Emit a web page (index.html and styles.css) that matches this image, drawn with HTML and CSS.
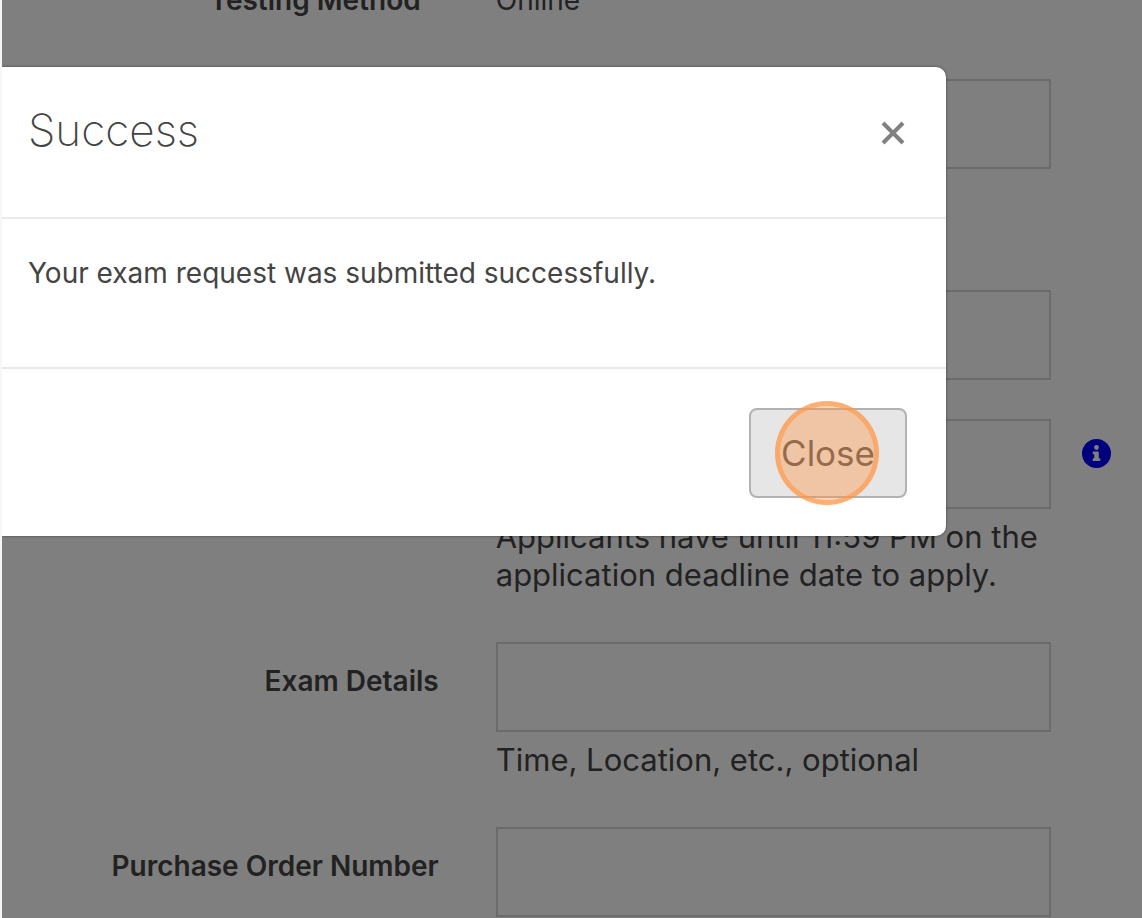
FILE: index.html
```html
<!DOCTYPE html>
<html lang="en">
<head>
  <meta charset="UTF-8">
  <meta name="viewport" content="width=device-width, initial-scale=1.0">
  <title>Exam Request</title>
  <link rel="stylesheet" href="styles.css">
</head>
<body>
  <div class="page">
    <form class="exam-form">
      <div class="form-row static-row">
        <span class="form-label">Testing Method</span>
        <span class="form-text">Online</span>
      </div>
      <div class="form-row spaced-row">
        <div class="field">
          <input type="text" class="form-input" aria-label="Testing location">
        </div>
      </div>
      <div class="form-row">
        <div class="field">
          <input type="text" class="form-input" aria-label="Exam date">
        </div>
      </div>
      <div class="form-row">
        <div class="field">
          <input type="text" class="form-input" aria-label="Application deadline">
          <p class="help">Applicants have until 11:59 PM on the application deadline date to apply.</p>
        </div>
        <a href="#" class="info" aria-label="More information">
          <svg viewBox="0 0 512 512" aria-hidden="true">
            <circle cx="256" cy="256" r="256" fill="#00f"/>
            <path fill="#fff" d="M256 106a43 43 0 1 1 0 86a43 43 0 1 1 0-86zM200 220h84a12 12 0 0 1 12 12v108h16a12 12 0 0 1 12 12v24a12 12 0 0 1-12 12H200a12 12 0 0 1-12-12v-24a12 12 0 0 1 12-12h16v-72h-16a12 12 0 0 1-12-12v-24a12 12 0 0 1 12-12z"/>
          </svg>
        </a>
      </div>
      <div class="form-row">
        <label class="form-label" for="exam-details">Exam Details</label>
        <div class="field">
          <input type="text" class="form-input" id="exam-details">
          <p class="help">Time, Location, etc., optional</p>
        </div>
      </div>
      <div class="form-row">
        <label class="form-label" for="po-number">Purchase Order Number</label>
        <div class="field">
          <input type="text" class="form-input" id="po-number">
        </div>
      </div>
    </form>

    <div class="backdrop">
      <div class="modal" role="dialog" aria-modal="true" aria-labelledby="modal-title">
        <div class="modal-header">
          <h1 class="modal-title" id="modal-title">Success</h1>
          <button type="button" class="modal-x" aria-label="Dismiss">
            <svg viewBox="0 0 24 24" aria-hidden="true">
              <path d="M2 2L22 22M22 2L2 22" stroke="#808080" stroke-width="4" fill="none"/>
            </svg>
          </button>
        </div>
        <div class="modal-body">
          <p>Your exam request was submitted successfully.</p>
        </div>
        <div class="modal-footer">
          <button type="button" class="btn">Close<span class="click-marker"></span></button>
        </div>
      </div>
    </div>
  </div>
</body>
</html>
```
FILE: styles.css
```css
* {
  box-sizing: border-box;
}

body {
  margin: 0;
  font-family: Inter, sans-serif;
  color: #444;
  background-color: #fff;
}

.page {
  position: relative;
  min-height: 100vh;
  border-left: 2px solid #f2f7fc;
  overflow: hidden;
}

/* Form */
.exam-form {
  margin-top: -19px;
  font-size: 31px;
  line-height: 38px;
}

.form-row {
  display: grid;
  grid-template-columns: 5fr 6fr 29px;
  column-gap: 31px;
  align-items: start;
  padding-right: 31px;
  margin-bottom: 39px;
}

.form-row:last-child {
  margin-bottom: 0;
}

.static-row {
  margin-bottom: 60px;
}

.spaced-row {
  margin-bottom: 121px;
}

.form-label {
  grid-column: 1;
  padding: 20px 26px 0 0;
  font-size: 28px;
  font-weight: 600;
  text-align: right;
}

.static-row .form-label {
  padding: 0 44px 0 0;
}

.form-text,
.field {
  grid-column: 2;
}

.form-text {
  font-size: 28px;
}

.form-input {
  display: block;
  width: 100%;
  height: 90px;
  padding: 0 24px;
  border: 2px solid #d6d6d6;
  background-color: #fff;
  font: inherit;
  color: inherit;
}

.help {
  margin: 9px 0;
}

.info {
  grid-column: 3;
  padding-top: 20px;
}

.info svg {
  display: block;
  width: 29px;
  height: 29px;
}

/* Modal */
.backdrop {
  position: absolute;
  inset: 0;
  padding: 67px 196px 0 0;
  background-color: rgba(0, 0, 0, 0.5);
}

.modal {
  border-radius: 0 10px 10px 0;
  background-color: #fff;
  box-shadow: 0 0 3px rgba(0, 0, 0, 0.5);
  color: #444;
}

.modal-header {
  display: flex;
  justify-content: space-between;
  align-items: flex-start;
  padding: 32px 39px 56px 26px;
}

.modal-title {
  margin: 0;
  font-size: 44px;
  font-weight: 200;
  line-height: 62px;
}

.modal-x {
  display: flex;
  margin-top: 20px;
  padding: 2px;
  border: none;
  background: none;
  cursor: pointer;
}

.modal-x svg {
  width: 24px;
  height: 24px;
}

.modal-body {
  padding: 35px 26px 75px;
  border-top: 2px solid #eaeaea;
  border-bottom: 2px solid #eaeaea;
  font-size: 28px;
  line-height: 38px;
}

.modal-body p {
  margin: 0;
}

.modal-footer {
  display: flex;
  justify-content: flex-end;
  padding: 39px 39px 38px;
}

.btn {
  position: relative;
  height: 90px;
  padding: 0 30px;
  border: 2px solid #b2b2b2;
  border-radius: 8px;
  background-color: #e6e6e6;
  font-family: inherit;
  font-size: 35px;
  color: #555;
  cursor: pointer;
}

.click-marker {
  position: absolute;
  top: -9px;
  left: 24px;
  width: 104px;
  height: 104px;
  border: 5px solid rgba(255, 150, 70, 0.6);
  border-radius: 50%;
  background-color: rgba(255, 145, 60, 0.38);
}
```
